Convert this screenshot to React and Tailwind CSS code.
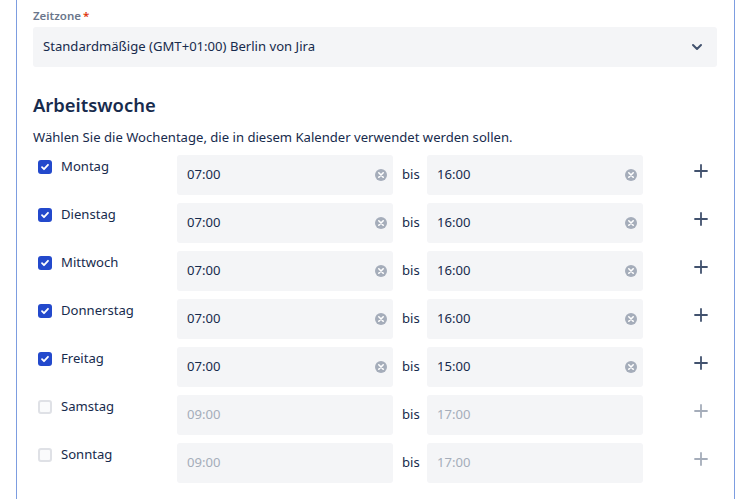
import React from "react";

const days = [
  { name: "Montag", on: true, from: "07:00", to: "16:00" },
  { name: "Dienstag", on: true, from: "07:00", to: "16:00" },
  { name: "Mittwoch", on: true, from: "07:00", to: "16:00" },
  { name: "Donnerstag", on: true, from: "07:00", to: "16:00" },
  { name: "Freitag", on: true, from: "07:00", to: "15:00" },
  { name: "Samstag", on: false, from: "09:00", to: "17:00" },
  { name: "Sonntag", on: false, from: "09:00", to: "17:00" },
];

function ClearIcon() {
  return (
    <svg width="14" height="14" viewBox="0 0 14 14" className="shrink-0">
      <circle cx="7" cy="7" r="6" fill="#a5adba" />
      <path d="M4.8 4.8l4.4 4.4M9.2 4.8l-4.4 4.4" stroke="#fff" strokeWidth="1.6" strokeLinecap="round" />
    </svg>
  );
}

function Checkbox({ on }) {
  if (on) {
    return (
      <span className="flex h-[14px] w-[14px] items-center justify-center rounded-[3px] bg-[#2349cc]">
        <svg width="10" height="10" viewBox="0 0 10 10">
          <path d="M2 5.2l2 2 4-4.4" fill="none" stroke="#fff" strokeWidth="1.8" strokeLinecap="round" strokeLinejoin="round" />
        </svg>
      </span>
    );
  }
  return <span className="h-[14px] w-[14px] rounded-[3px] border-2 border-[#dfe1e6] bg-[#fafbfc]" />;
}

function TimeField({ value, on }) {
  return (
    <div className="flex h-10 items-center justify-between rounded-[3px] bg-[#f4f5f7] pl-[10px] pr-[5px]">
      <span className={on ? "text-[#172b4d]" : "text-[#a5adba]"}>{value}</span>
      {on && <ClearIcon />}
    </div>
  );
}

function Plus({ on }) {
  const c = on ? "#42526e" : "#a5adba";
  return (
    <div className="ml-[42px] flex h-8 w-8 items-center justify-center">
      <svg width="14" height="14" viewBox="0 0 14 14">
        <path d="M7 1v12M1 7h12" stroke={c} strokeWidth="1.8" strokeLinecap="round" />
      </svg>
    </div>
  );
}

export default function App() {
  return (
    <div className="h-[499px] w-[748px] overflow-hidden bg-white font-['Segoe_UI','Noto_Sans',sans-serif] text-[13.1px] text-[#172b4d]">
      <div className="ml-[16px] h-full w-[719px] border-x border-[#7d9de0] pl-[16px] pr-[17px] pt-[8px]">
        <div className="flex h-4 items-center text-[11.5px] font-semibold leading-4 text-[#6b778c]">
          Zeitzone<span className="ml-[2px] text-[#de350b]">*</span>
        </div>
        <div className="mt-[3px] flex h-10 items-center justify-between rounded-[3px] bg-[#f4f5f7] pl-[10px] pr-[14px]">
          <span>Standardmäßige (GMT+01:00) Berlin von Jira</span>
          <svg width="12" height="8" viewBox="0 0 12 8">
            <path d="M2 2l4 4 4-4" fill="none" stroke="#42526e" strokeWidth="2" strokeLinecap="round" strokeLinejoin="round" />
          </svg>
        </div>
        <h2 className="mt-[26px] text-[18.4px] font-semibold leading-6 text-[#172b4d]">Arbeitswoche</h2>
        <p className="mt-[10px] leading-5">Wählen Sie die Wochentage, die in diesem Kalender verwendet werden sollen.</p>
        <div className="mt-[8px] flex flex-col gap-2">
          {days.map((d) => (
            <div key={d.name} className="grid grid-cols-[144px_216px_34px_216px_1fr] items-start">
              <div className="flex h-6 items-center">
                <span className="flex w-6 items-center justify-center">
                  <Checkbox on={d.on} />
                </span>
                <span className="ml-[4px]">{d.name}</span>
              </div>
              <TimeField value={d.from} on={d.on} />
              <div className="flex h-10 items-center pl-[9px]">bis</div>
              <TimeField value={d.to} on={d.on} />
              <Plus on={d.on} />
            </div>
          ))}
        </div>
      </div>
    </div>
  );
}
